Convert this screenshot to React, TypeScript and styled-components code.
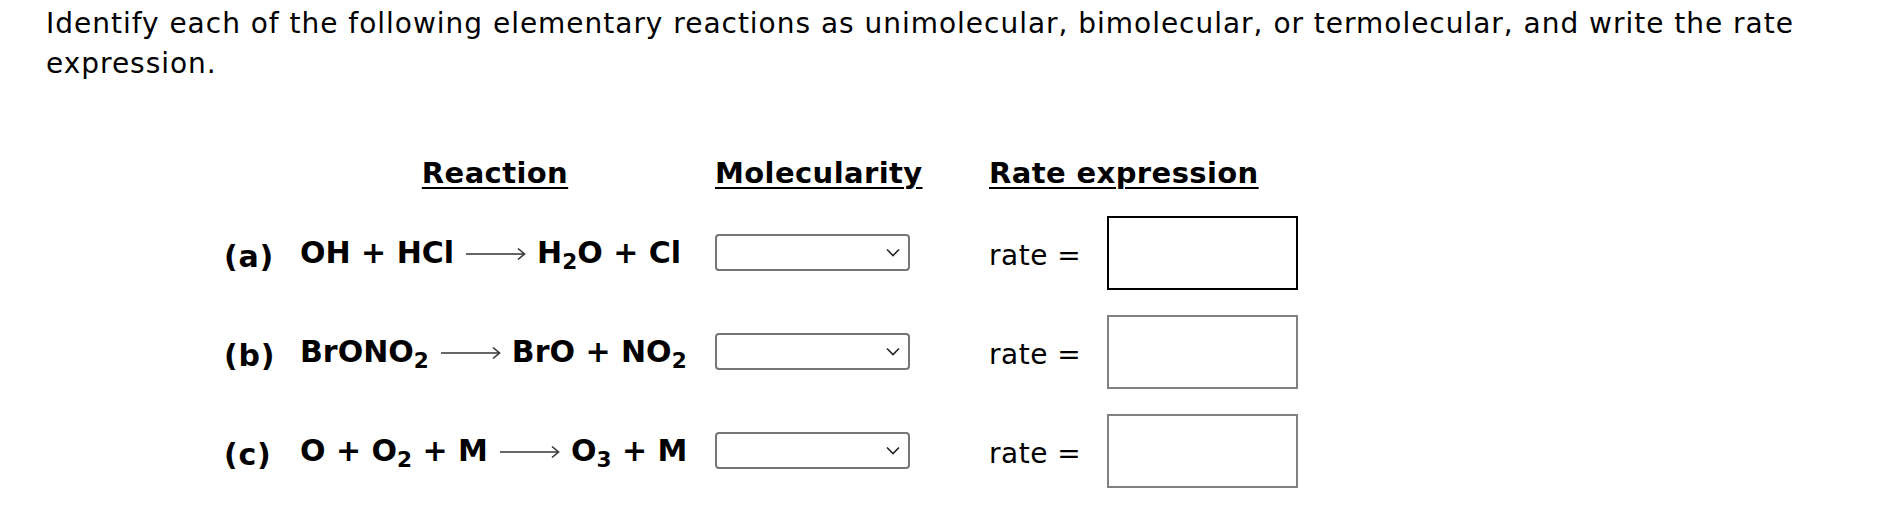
import React from "react";
import styled, { createGlobalStyle } from "styled-components";

const GlobalStyle = createGlobalStyle`
  html, body {
    margin: 0;
    padding: 0;
    background: #ffffff;
  }
  body {
    font-family: "DejaVu Sans", Verdana, sans-serif;
    color: #000000;
  }
`;

const Page = styled.div`
  padding: 4px 0 0 46px;
  width: 1882px;
  box-sizing: border-box;
`;

const Prompt = styled.p`
  margin: 0;
  font-size: 28px;
  letter-spacing: 0.98px;
  line-height: 40px;
  max-width: 1800px;
`;

const Table = styled.div`
  display: grid;
  grid-template-columns: 76px 415px 274px 118px 192px;
  grid-template-rows: 61px repeat(3, 99px);
  align-items: center;
  margin: 58px 0 0 178px;
`;

const Header = styled.div<{ $center?: boolean; $span?: number }>`
  font-weight: bold;
  font-size: 29px;
  letter-spacing: 0.4px;
  text-decoration: underline;
  text-underline-offset: 4px;
  text-decoration-thickness: 2px;
  white-space: nowrap;
  text-align: ${(p) => (p.$center ? "center" : "left")};
  padding-right: ${(p) => (p.$center ? "25px" : "0")};
  grid-column: ${(p) => (p.$span ? `span ${p.$span}` : "auto")};
`;

const Spacer = styled.div``;

const Label = styled.div`
  font-weight: bold;
  font-size: 30px;
  letter-spacing: 0.8px;
  white-space: nowrap;
  padding-top: 7px;
`;

const Reaction = styled.div`
  font-weight: bold;
  font-size: 30px;
  white-space: nowrap;
  line-height: 1.2;
`;

const Sub = styled.sub`
  font-size: 0.72em;
  vertical-align: -0.3em;
  line-height: 0;
`;

const ArrowSvg = styled.svg`
  width: 60px;
  height: 14px;
  margin: 0 11px 0 12px;
  vertical-align: middle;
`;

const SelectBox = styled.div`
  width: 195px;
  height: 37px;
  box-sizing: border-box;
  border: 2px solid #767676;
  border-radius: 4px;
  display: flex;
  align-items: center;
  justify-content: flex-end;
  padding-right: 8px;
  background: #fff;
`;

const RateLabel = styled.div`
  font-size: 28px;
  letter-spacing: 0.5px;
  white-space: nowrap;
  padding-top: 6px;
`;

const AnswerBox = styled.div<{ $focused?: boolean }>`
  width: 191px;
  height: 74px;
  box-sizing: border-box;
  border: 2px solid ${(p) => (p.$focused ? "#000000" : "#808080")};
  background: #fff;
`;

const Arrow = () => (
  <ArrowSvg viewBox="0 0 60 14">
    <line x1="0" y1="7" x2="58" y2="7" stroke="#333" strokeWidth="1.6" />
    <polyline points="52,1.5 58.5,7 52,12.5" fill="none" stroke="#333" strokeWidth="1.6" />
  </ArrowSvg>
);

const Chevron = () => (
  <svg width="14" height="9" viewBox="0 0 14 9">
    <polyline points="1,1.5 7,7.5 13,1.5" fill="none" stroke="#222" strokeWidth="1.6" />
  </svg>
);

type Row = {
  label: string;
  left: React.ReactNode;
  right: React.ReactNode;
  focused?: boolean;
};

const rows: Row[] = [
  {
    label: "(a)",
    left: <>OH + HCl</>,
    right: (
      <>
        H<Sub>2</Sub>O + Cl
      </>
    ),
    focused: true,
  },
  {
    label: "(b)",
    left: (
      <>
        BrONO<Sub>2</Sub>
      </>
    ),
    right: (
      <>
        BrO + NO<Sub>2</Sub>
      </>
    ),
  },
  {
    label: "(c)",
    left: (
      <>
        O + O<Sub>2</Sub> + M
      </>
    ),
    right: (
      <>
        O<Sub>3</Sub> + M
      </>
    ),
  },
];

export default function App() {
  return (
    <>
      <GlobalStyle />
      <Page>
        <Prompt>
          Identify each of the following elementary reactions as unimolecular, bimolecular, or
          termolecular, and write the rate expression.
        </Prompt>
        <Table>
          <Spacer />
          <Header $center>Reaction</Header>
          <Header>Molecularity</Header>
          <Header $span={2}>Rate expression</Header>
          {rows.map((r) => (
            <React.Fragment key={r.label}>
              <Label>{r.label}</Label>
              <Reaction>
                {r.left}
                <Arrow />
                {r.right}
              </Reaction>
              <SelectBox>
                <Chevron />
              </SelectBox>
              <RateLabel>rate =</RateLabel>
              <AnswerBox $focused={r.focused} />
            </React.Fragment>
          ))}
        </Table>
      </Page>
    </>
  );
}
